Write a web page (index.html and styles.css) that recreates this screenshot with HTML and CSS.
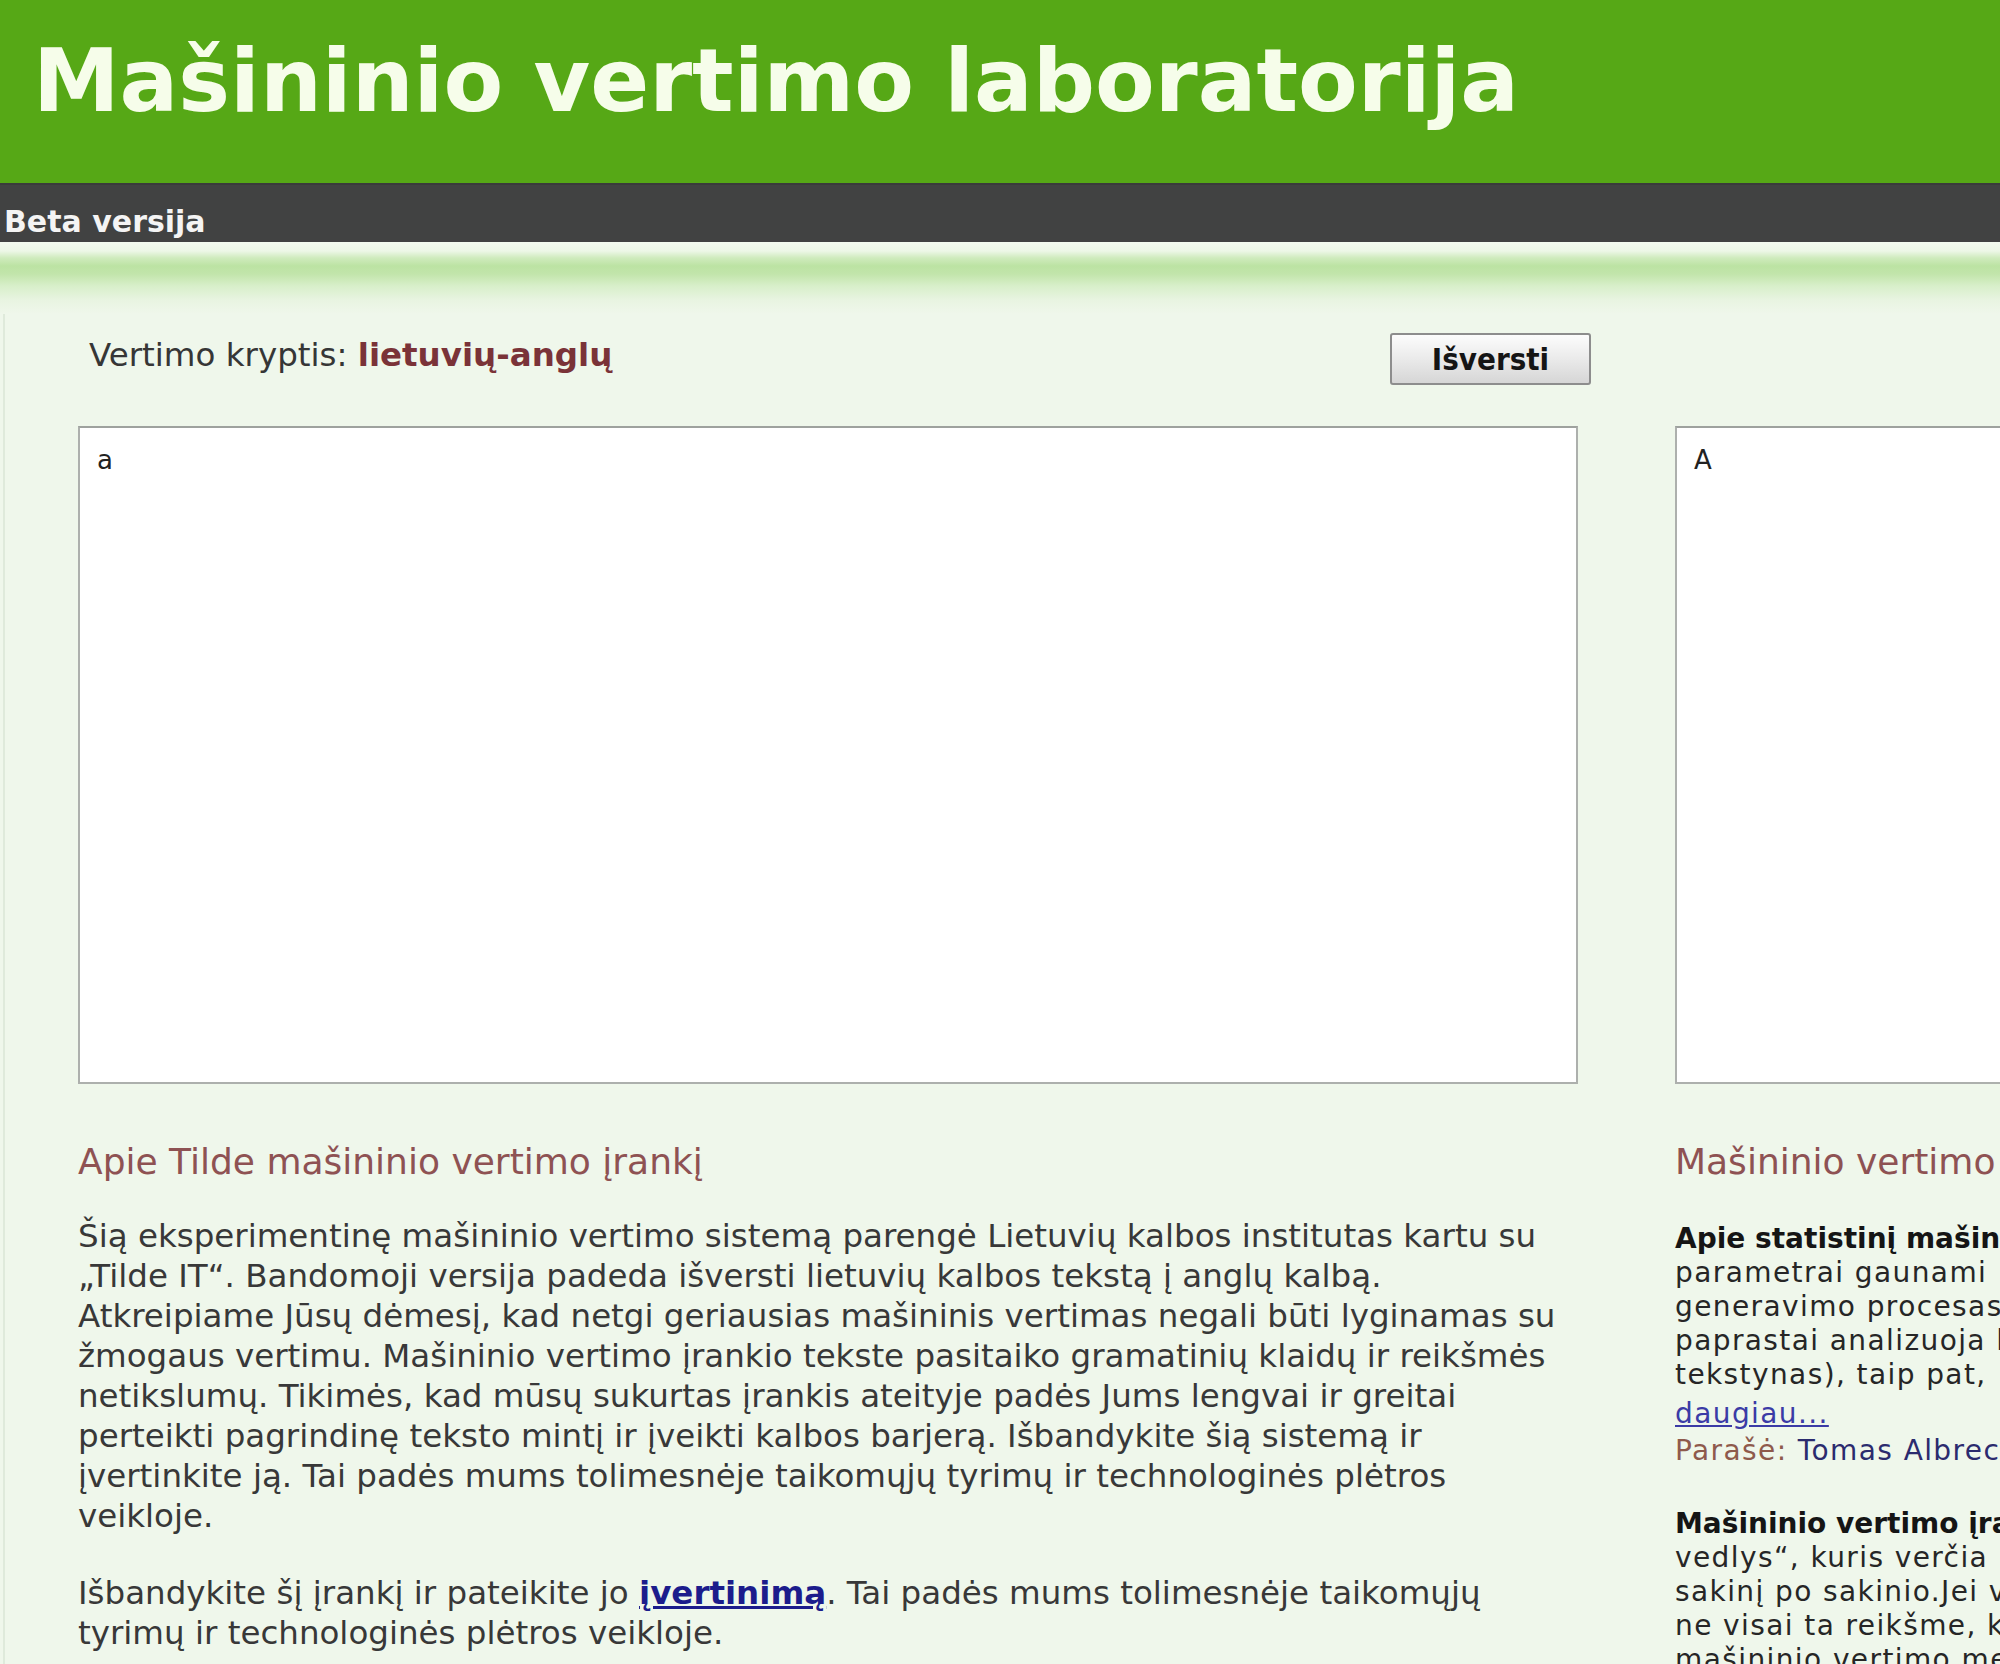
FILE: index.html
```html
<!DOCTYPE html>
<html lang="lt">
<head>
<meta charset="utf-8">
<title>Mašininio vertimo laboratorija</title>
<link rel="stylesheet" href="styles.css">
</head>
<body>
<header class="site-header">
  <h1 class="site-title">Mašininio vertimo laboratorija</h1>
</header>
<div class="subbar">Beta versija</div>
<div class="glow"></div>
<main class="main">
  <div class="toprow">
    <div class="direction">Vertimo kryptis: <strong class="lang">lietuvių-anglų</strong></div>
    <button class="translate-btn" type="button">Išversti</button>
  </div>
  <div class="columns">
    <section class="col">
      <textarea class="box">a</textarea>
      <h2 class="col-title">Apie Tilde mašininio vertimo įrankį</h2>
      <p class="lead">Šią eksperimentinę mašininio vertimo sistemą parengė Lietuvių kalbos institutas kartu su „Tilde IT“. Bandomoji versija padeda išversti lietuvių kalbos tekstą į anglų kalbą. Atkreipiame Jūsų dėmesį, kad netgi geriausias mašininis vertimas negali būti lyginamas su žmogaus vertimu. Mašininio vertimo įrankio tekste pasitaiko gramatinių klaidų ir reikšmės netikslumų. Tikimės, kad mūsų sukurtas įrankis ateityje padės Jums lengvai ir greitai perteikti pagrindinę teksto mintį ir įveikti kalbos barjerą. Išbandykite šią sistemą ir įvertinkite ją. Tai padės mums tolimesnėje taikomųjų tyrimų ir technologinės plėtros veikloje.</p>
      <p class="lead second">Išbandykite šį įrankį ir pateikite jo <a class="strong-link" href="#">įvertinimą</a>. Tai padės mums tolimesnėje taikomųjų tyrimų ir technologinės plėtros veikloje.</p>
    </section>
    <section class="col col-right">
      <textarea class="box">A</textarea>
      <h2 class="col-title">Mašininio vertimo naujienos</h2>
      <p class="news"><b>Apie statistinį mašininį vertimą.</b> Statistinio vertimo modelio<br>parametrai gaunami<br>generavimo procesas remiasi statistiniais modeliais. Sistema<br>paprastai analizuoja lygiagrečius tekstus (vadinamasis lygiagretusis<br>tekstynas), taip pat,</p>
      <div class="more-row"><a class="more" href="#">daugiau...</a></div>
      <div class="byline"><span class="by">Parašė:</span> <span class="author">Tomas Albrecht</span></div>
      <p class="news second-news"><b>Mašininio vertimo įrankis – ne vertėjas.</b> Tai „elektroninis<br>vedlys“, kuris verčia<br>sakinį po sakinio.Jei vertimas atrodo keistas ar perteikia<br>ne visai ta reikšme, kurios tikėjotės, prisiminkite, kad tai<br>mašininio vertimo metu sukurtas tekstas.</p>
    </section>
  </div>
</main>
</body>
</html>
```
FILE: styles.css
```css
html, body {
  margin: 0;
  padding: 0;
}
body {
  background: #eff7eb;
  font-family: "DejaVu Sans", Verdana, sans-serif;
  color: #333;
  overflow: hidden;
  width: 2000px;
  height: 1664px;
}
.site-header {
  height: 183px;
  background: #56a816;
  box-sizing: border-box;
  padding: 31px 0 0 33px;
}
.site-title {
  margin: 0;
  font-size: 87px;
  line-height: 101px;
  font-weight: bold;
  color: #f6fdea;
  white-space: nowrap;
}
.subbar {
  height: 59px;
  box-sizing: border-box;
  background: #414242;
  border-top: 2px solid #3a3b3b;
  padding: 19px 0 0 4px;
  font-size: 30px;
  line-height: 36px;
  font-weight: bold;
  color: #f4f4f4;
}
.glow {
  height: 72px;
  background: linear-gradient(to bottom, #f3faef 0px, #edf7e7 9px, #cfebbd 16px, #bce3a3 24px, #c2e5ab 32px, #d8efca 44px, #e8f4e1 58px, #eff7eb 72px);
}
.main {
  margin-left: 3px;
  border-left: 2px solid #dfeadb;
  padding: 19px 0 0 73px;
}
.toprow {
  display: flex;
  justify-content: space-between;
  align-items: flex-start;
  width: 1502px;
  margin-left: 11px;
  height: 52px;
}
.direction {
  font-size: 32.5px;
  line-height: 38px;
  padding-top: 3px;
  color: #363636;
  white-space: nowrap;
}
.lang {
  color: #7a3338;
  font-weight: bold;
}
.translate-btn {
  width: 201px;
  height: 52px;
  box-sizing: border-box;
  margin: 0;
  padding: 0;
  border: 2px solid #8d8d8d;
  border-radius: 3px;
  background: linear-gradient(to bottom, #fcfcfc 0%, #ececec 45%, #d6d6d6 100%);
  font-family: "DejaVu Sans Condensed", "DejaVu Sans", sans-serif;
  font-stretch: condensed;
  font-weight: bold;
  font-size: 31px;
  color: #151515;
}
.columns {
  display: grid;
  grid-template-columns: 1500px 1500px;
  column-gap: 97px;
  margin-top: 41px;
}
.col {
  min-width: 0;
}
.box {
  display: block;
  width: 1500px;
  height: 658px;
  box-sizing: border-box;
  margin: 0;
  padding: 17px 17px;
  border: 2px solid #adb0ad;
  border-top-color: #9ea29e;
  background: #fff;
  font-family: "DejaVu Sans", sans-serif;
  font-size: 26px;
  color: #222;
  resize: none;
  overflow: hidden;
}
.col-title {
  margin: 56px 0 0;
  font-size: 36px;
  line-height: 44px;
  font-weight: normal;
  color: #8e5253;
  white-space: nowrap;
}
.lead {
  margin: 32px 0 0;
  font-size: 32.5px;
  line-height: 40px;
  color: #383838;
}
.lead.second {
  margin-top: 37px;
}
.strong-link {
  color: #1c1c8c;
  font-weight: bold;
  text-decoration: underline;
}
.news {
  margin: 38px 0 0;
  font-size: 28px;
  line-height: 34px;
  letter-spacing: 1.4px;
  color: #262626;
  white-space: nowrap;
}
.news b {
  color: #151515;
  letter-spacing: 0;
}
.more-row {
  margin-top: 5px;
  font-size: 28px;
  line-height: 34px;
  letter-spacing: 1.4px;
}
.byline {
  margin-top: 3px;
  font-size: 28px;
  line-height: 34px;
  letter-spacing: 1.4px;
  white-space: nowrap;
}
.second-news {
  margin-top: 39px;
}
.more {
  color: #3b3ba6;
  text-decoration: underline;
}
.by {
  color: #8e5a4c;
}
.author {
  color: #2b2b6e;
}
```
